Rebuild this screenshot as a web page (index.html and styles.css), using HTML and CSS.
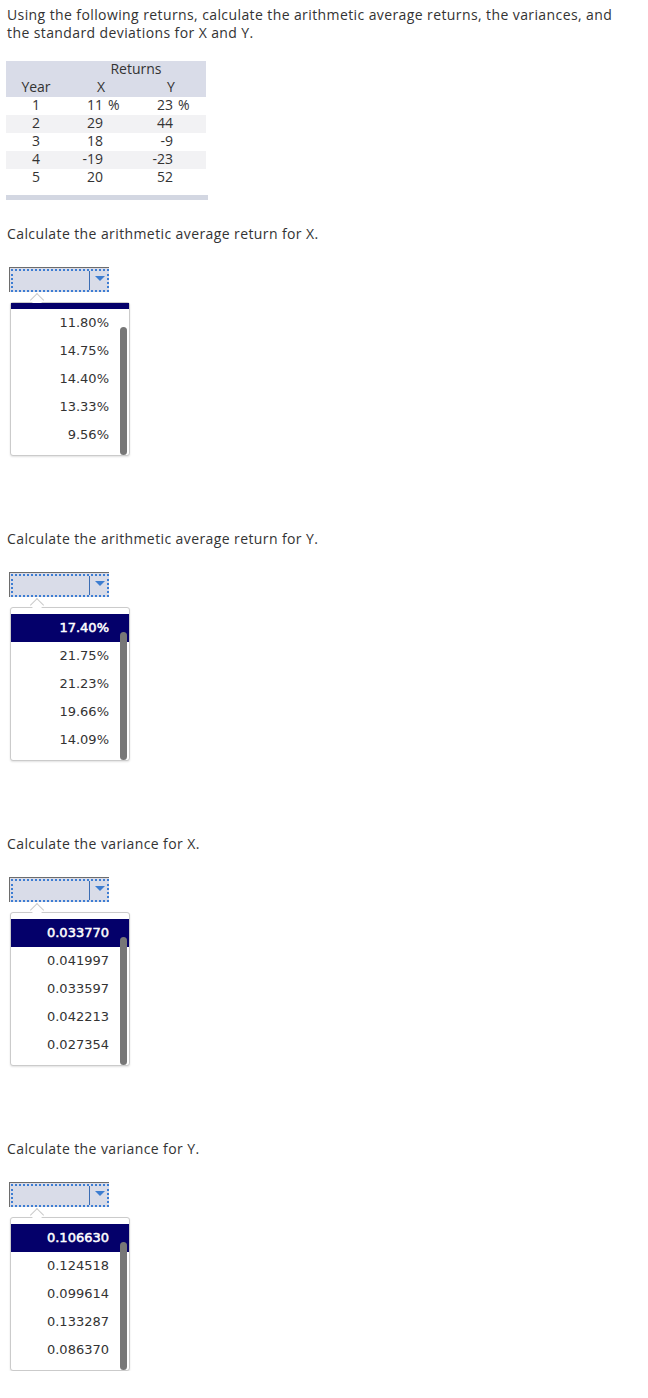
FILE: index.html
```html
<!DOCTYPE html>
<html lang="en">
<head>
    <meta charset="UTF-8">
    <meta name="viewport" content="width=device-width, initial-scale=1.0">
    <title>Returns, Variances and Standard Deviations</title>
    <link rel="stylesheet" href="styles.css">
</head>
<body>
    <div class="page">
        <p class="intro">Using the following returns, calculate the arithmetic average returns, the variances, and the standard deviations for X and Y.</p>

        <!-- Returns table -->
        <table class="returns">
            <colgroup>
                <col class="col-year">
                <col class="col-num">
                <col class="col-pct">
                <col class="col-num-y">
                <col class="col-pct-y">
            </colgroup>
            <thead>
                <tr>
                    <th></th>
                    <th colspan="4" class="head-returns">Returns</th>
                </tr>
                <tr>
                    <th>Year</th>
                    <th colspan="2" class="head-letter">X</th>
                    <th colspan="2" class="head-letter">Y</th>
                </tr>
            </thead>
            <tbody>
                <tr><td>1</td><td class="num">11</td><td class="pct">%</td><td class="num">23</td><td class="pct">%</td></tr>
                <tr><td>2</td><td class="num">29</td><td class="pct"></td><td class="num">44</td><td class="pct"></td></tr>
                <tr><td>3</td><td class="num">18</td><td class="pct"></td><td class="num">-9</td><td class="pct"></td></tr>
                <tr><td>4</td><td class="num">-19</td><td class="pct"></td><td class="num">-23</td><td class="pct"></td></tr>
                <tr><td>5</td><td class="num">20</td><td class="pct"></td><td class="num">52</td><td class="pct"></td></tr>
            </tbody>
        </table>
        <div class="table-foot"></div>

        <!-- Question 1 -->
        <div class="question">
            <p class="prompt">Calculate the arithmetic average return for X.</p>
            <div class="select"><div class="select-field"><span class="select-value"></span><span class="select-btn"><span class="caret"></span></span></div></div>
            <div class="dropdown dropdown-scrolled">
                <div class="option-strip"></div>
                <div class="option">11.80%</div>
                <div class="option">14.75%</div>
                <div class="option">14.40%</div>
                <div class="option">13.33%</div>
                <div class="option">9.56%</div>
                <div class="scrollbar"></div>
            </div>
        </div>

        <!-- Question 2 -->
        <div class="question">
            <p class="prompt">Calculate the arithmetic average return for Y.</p>
            <div class="select"><div class="select-field"><span class="select-value"></span><span class="select-btn"><span class="caret"></span></span></div></div>
            <div class="dropdown">
                <div class="option selected">17.40%</div>
                <div class="option">21.75%</div>
                <div class="option">21.23%</div>
                <div class="option">19.66%</div>
                <div class="option">14.09%</div>
                <div class="scrollbar"></div>
            </div>
        </div>

        <!-- Question 3 -->
        <div class="question">
            <p class="prompt">Calculate the variance for X.</p>
            <div class="select"><div class="select-field"><span class="select-value"></span><span class="select-btn"><span class="caret"></span></span></div></div>
            <div class="dropdown">
                <div class="option selected">0.033770</div>
                <div class="option">0.041997</div>
                <div class="option">0.033597</div>
                <div class="option">0.042213</div>
                <div class="option">0.027354</div>
                <div class="scrollbar"></div>
            </div>
        </div>

        <!-- Question 4 -->
        <div class="question">
            <p class="prompt">Calculate the variance for Y.</p>
            <div class="select"><div class="select-field"><span class="select-value"></span><span class="select-btn"><span class="caret"></span></span></div></div>
            <div class="dropdown">
                <div class="option selected">0.106630</div>
                <div class="option">0.124518</div>
                <div class="option">0.099614</div>
                <div class="option">0.133287</div>
                <div class="option">0.086370</div>
                <div class="scrollbar"></div>
            </div>
        </div>
    </div>
</body>
</html>
```

FILE: styles.css
```css
body {
    margin: 0;
    background: #fff;
    color: #333;
    font-family: "Open Sans", Lato, sans-serif;
    font-size: 14px;
    line-height: 18px;
}

.page {
    padding: 6px 0 0 6px;
}

.intro,
.prompt {
    margin: 0 0 0 1px;
    letter-spacing: 0.4px;
}

.intro {
    width: 620px;
}

/* returns table */
.returns {
    margin-top: 19px;
    width: 200px;
    border-collapse: collapse;
    table-layout: fixed;
}

.col-year { width: 60px; }
.col-num { width: 40px; }
.col-pct { width: 20px; }
.col-num-y { width: 50px; }
.col-pct-y { width: 30px; }

.returns th,
.returns td {
    height: 18px;
    padding: 0 0 2px 0;
    line-height: 16px;
    font-weight: normal;
    text-align: center;
    box-sizing: border-box;
}

.returns thead tr {
    background: #d9dce8;
}

.returns .head-letter {
    padding-left: 10px;
}

.returns tbody tr:nth-child(even) {
    background: #f2f2f4;
}

.returns td.num {
    text-align: right;
    padding-right: 3px;
}

.returns td.pct {
    text-align: left;
    padding-left: 2px;
}

.table-foot {
    width: 202px;
    height: 5px;
    margin-top: 8px;
    background: #d3d7e2;
}

/* questions */
.question {
    margin-top: 74px;
}

.table-foot + .question {
    margin-top: 25px;
}

.select {
    width: 100px;
    height: 25px;
    margin: 24px 0 0 3px;
    padding: 1px 0 0 1px;
    box-sizing: border-box;
    border-top: 1px solid #6d6d6d;
    border-left: 1px solid #6d6d6d;
    background: #d9dce8;
}

.select-field {
    display: flex;
    height: 100%;
    box-sizing: border-box;
    border: 2px dotted #3d7dd3;
}

.select-value {
    flex: 1;
}

.select-btn {
    width: 17px;
    border-left: 1px solid #3c6db3;
    display: flex;
    align-items: flex-start;
}

.caret {
    margin: 5px 0 0 5px;
    width: 0;
    height: 0;
    border-left: 5px solid transparent;
    border-right: 5px solid transparent;
    border-top: 5px solid #3d7dd0;
}

.dropdown {
    position: relative;
    width: 118px;
    margin: 10px 0 0 4px;
    padding: 6px 0;
    border: 1px solid #cbcbcb;
    border-radius: 3px;
    background: #fff;
    box-shadow: 0 1px 2px rgba(0, 0, 0, 0.12);
    font-family: "DejaVu Sans", Verdana, sans-serif;
    font-size: 13px;
}

.dropdown::before {
    content: "";
    position: absolute;
    top: -8px;
    left: 21px;
    width: 9px;
    height: 9px;
    background: #fff;
    border-top: 1px solid #cbcbcb;
    border-left: 1px solid #cbcbcb;
    transform: rotate(45deg);
}

.dropdown-scrolled {
    padding-top: 0;
}

.option-strip {
    position: relative;
    height: 6px;
    background: #04006a;
}

.option {
    position: relative;
    height: 28px;
    line-height: 28px;
    padding-right: 20px;
    text-align: right;
    color: #333;
}

.option.selected {
    background: #04006a;
    color: #fff;
    -webkit-text-stroke: 0.5px #fff;
}

.scrollbar {
    position: absolute;
    top: 24px;
    bottom: 0;
    right: 2px;
    width: 7px;
    border-radius: 4px;
    background: #777;
}
```
